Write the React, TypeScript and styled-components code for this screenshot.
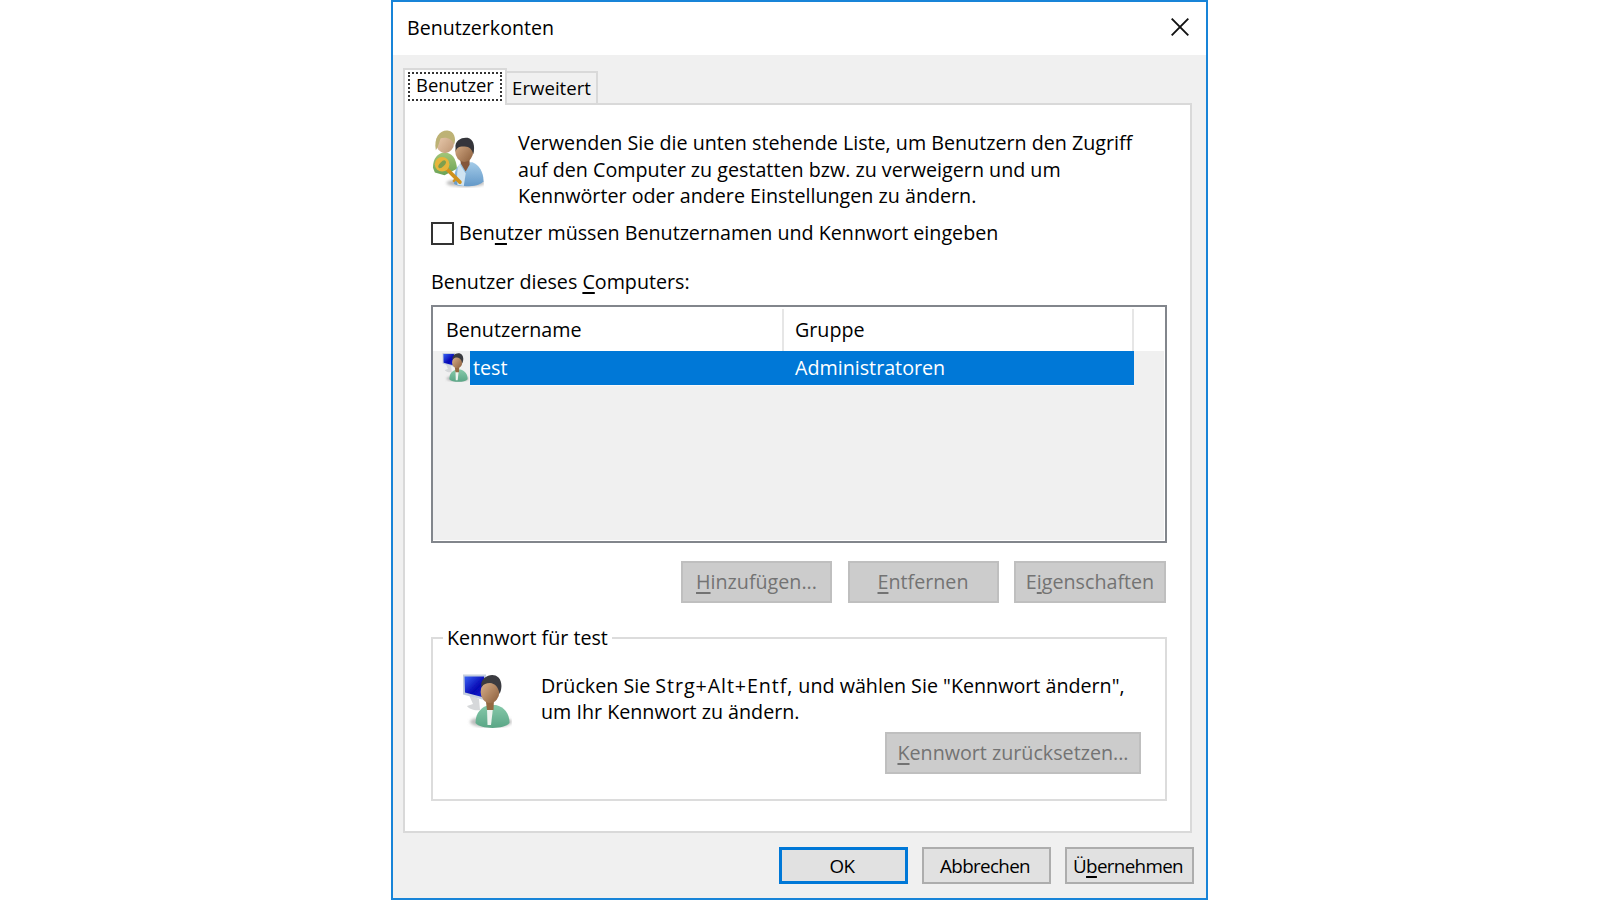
import React from "react";
import styled, { createGlobalStyle } from "styled-components";

const Global = createGlobalStyle`
  html, body { margin: 0; padding: 0; background: #ffffff; }
  body { font-family: "Open Sans", "Liberation Sans", sans-serif; font-size: 19.7px; color: #000; }
  * { box-sizing: border-box; }
`;

const Page = styled.div`
  width: 1600px;
  height: 900px;
  padding-left: 391px;
  overflow: hidden;
`;
const Win = styled.div`
  width: 817px;
  height: 900px;
  border: 2px solid #1884d8;
  background: #f0f0f0;
  display: flex;
  flex-direction: column;
`;
const TitleBar = styled.div`
  height: 53px;
  background: #fff;
  display: flex;
  align-items: center;
  justify-content: space-between;
  padding: 0 17px 3px 14px;
  flex: none;
`;
const Title = styled.div`
  font-size: 19.6px;
  margin-top: 1px;
`;
const Body = styled.div`
  padding: 13px 14px 0 10px;
  flex: none;
`;
const Tabs = styled.div`
  display: flex;
  align-items: flex-end;
  height: 35px;
  position: relative;
  z-index: 1;
`;
const ActiveTab = styled.div`
  width: 104px;
  height: 37px;
  margin-bottom: -2px;
  background: #fff;
  border: 2px solid #d9d9d9;
  border-bottom: none;
  padding: 2px 2px 3px 3px;
`;
const Focus = styled.div`
  height: 29px;
  margin-right: 1px;
  border: 2px dotted #333;
  display: flex;
  align-items: center;
  justify-content: center;
  font-size: 18.4px;
  line-height: 24px;
  padding-bottom: 4px;
`;
const PlainTab = styled.div`
  width: 91px;
  height: 32px;
  background: #f0f0f0;
  border: 2px solid #d9d9d9;
  border-left: none;
  border-bottom: none;
  display: flex;
  align-items: center;
  justify-content: center;
  padding-bottom: 2px;
  font-size: 18.6px;
`;
const Panel = styled.div`
  height: 730px;
  background: #fff;
  border: 2px solid #d9d9d9;
  padding: 25px 23px 0 26px;
`;
const Intro = styled.div`
  display: flex;
  height: 79.5px;
`;
const IntroIconCell = styled.div`
  width: 87px;
  flex: none;
`;
const IntroIcon = styled.svg`
  display: block;
  margin: 0 0 0 1px;
`;
const Para = styled.p`
  margin: 0;
  line-height: 26.5px;
  white-space: nowrap;
`;
const CheckRow = styled.div`
  margin-top: 12px;
  height: 23px;
  display: flex;
  align-items: center;
  gap: 5px;
  white-space: nowrap;
`;
const Box = styled.span`
  width: 23px;
  height: 23px;
  flex: none;
  background: #fff;
  border: 2px solid #333;
`;
const CheckText = styled.span`
  padding-bottom: 2px;
`;
const Key = styled.span`
  text-decoration: underline;
  text-decoration-thickness: 1.5px;
  text-underline-offset: 3px;
`;
const FieldLabel = styled.div`
  margin-top: 24px;
  line-height: 26.5px;
`;
const List = styled.div`
  margin-top: 9.5px;
  height: 238px;
  border: 2px solid #82868c;
  background: #f0f0f0;
  display: flex;
  flex-direction: column;
  box-shadow: inset -1px -1px 0 #fff;
`;
const ListHead = styled.div`
  height: 44px;
  background: #fff;
  flex: none;
  display: flex;
`;
const HeadCell = styled.div<{ $w: number; $pad: number }>`
  width: ${(p) => p.$w}px;
  flex: none;
  padding-left: ${(p) => p.$pad}px;
  margin-top: 2px;
  border-right: 2px solid #e6e6e6;
  display: flex;
  align-items: center;
`;
const ListRow = styled.div`
  height: 34px;
  display: flex;
  flex: none;
`;
const RowIconCell = styled.div`
  width: 37px;
  flex: none;
  padding: 1px 0 0 9px;
`;
const SmallIcon = styled.svg`
  display: block;
`;
const Selected = styled.div`
  width: 664px;
  flex: none;
  background: #0078d7;
  color: #fff;
  display: flex;
  align-items: center;
  box-shadow: 0 1px 0 #f9f9f9;
`;
const SelCell = styled.div<{ $w: number }>`
  width: ${(p) => p.$w}px;
  flex: none;
  padding-left: ${(p) => (p.$w > 320 ? 12 : 3)}px;
`;
const ButtonRow = styled.div`
  margin-top: 18px;
  display: flex;
  justify-content: flex-end;
  gap: 15.5px;
  padding-right: 1px;
`;
const DisabledButton = styled.div<{ $w: number }>`
  width: ${(p) => p.$w}px;
  height: 42px;
  background: #cccccc;
  border: 2px solid #bfbfbf;
  color: #737373;
  display: flex;
  align-items: center;
  justify-content: center;
  white-space: nowrap;
`;
const Group = styled.fieldset`
  margin: 22px 0 0 0;
  padding: 0 24px 0 0;
  height: 176px;
  border: 2px solid #dcdcdc;
  min-width: 0;
`;
const Legend = styled.legend`
  margin-left: 10px;
  padding: 0 4px;
  line-height: 26px;
`;
const GroupBody = styled.div`
  display: flex;
  padding-top: 22px;
  height: 75px;
`;
const GroupIconCell = styled.div`
  width: 108px;
  flex: none;
  padding-left: 29px;
`;
const GroupIcon = styled.svg`
  display: block;
`;
const Combo = styled.span`
  letter-spacing: 0.9px;
`;
const GroupAction = styled.div`
  display: flex;
  justify-content: flex-end;
  margin-top: 6px;
`;
const Footer = styled.div`
  display: flex;
  justify-content: flex-end;
  gap: 14px;
  padding-top: 14px;
  margin-right: -2px;
`;
const FootButton = styled.div<{ $primary?: boolean }>`
  width: 129px;
  height: 37px;
  background: #e1e1e1;
  border: ${(p) => (p.$primary ? "3px solid #0078d7" : "2px solid #adadad")};
  display: flex;
  align-items: center;
  justify-content: center;
  white-space: nowrap;
  font-size: 18.8px;
  letter-spacing: -0.65px;
  padding-right: 3px;
`;

const CloseIcon = () => (
  <svg width="18" height="18" viewBox="0 0 18 18" aria-hidden>
    <path d="M0.7 0.7 L17.3 17.3 M17.3 0.7 L0.7 17.3" stroke="#111" strokeWidth="1.9" fill="none" />
  </svg>
);

const IconDefs = () => (
  <defs>
    <filter id="soft" x="-10%" y="-10%" width="120%" height="120%">
      <feGaussianBlur stdDeviation="0.6" />
    </filter>
    <filter id="softer" x="-30%" y="-50%" width="160%" height="200%">
      <feGaussianBlur stdDeviation="1.8" />
    </filter>
    <linearGradient id="skin" x1="0" y1="0" x2="1" y2="1">
      <stop offset="0" stopColor="#dcb48e" />
      <stop offset="1" stopColor="#8a5c3a" />
    </linearGradient>
    <linearGradient id="skinLight" x1="0" y1="0" x2="1" y2="1">
      <stop offset="0" stopColor="#efd2b6" />
      <stop offset="1" stopColor="#bd9573" />
    </linearGradient>
    <linearGradient id="screen" x1="0" y1="0" x2="1" y2="1">
      <stop offset="0" stopColor="#3a63f4" />
      <stop offset="0.55" stopColor="#0608b4" />
      <stop offset="1" stopColor="#0a2ad8" />
    </linearGradient>
    <linearGradient id="green" x1="0" y1="0" x2="0" y2="1">
      <stop offset="0" stopColor="#86c9aa" />
      <stop offset="1" stopColor="#5aa686" />
    </linearGradient>
    <linearGradient id="blue" x1="0" y1="0" x2="0" y2="1">
      <stop offset="0" stopColor="#a4cbe8" />
      <stop offset="1" stopColor="#6298c8" />
    </linearGradient>
    <linearGradient id="leaf" x1="0" y1="0" x2="0" y2="1">
      <stop offset="0" stopColor="#a3c678" />
      <stop offset="1" stopColor="#6aa356" />
    </linearGradient>
  </defs>
);

const PersonShapes = () => (
  <g filter="url(#soft)">
    <ellipse cx="42" cy="59" rx="21" ry="5.5" fill="#bdbdbd" filter="url(#softer)" />
    <path d="M20 32 L30 36 L31 47 C26 48 20 46 18 43 L24 41 Z" fill="#d6d8da" />
    <path d="M14 11.5 L37 11.5 L39 38 L14 31.5 Z" fill="#c4cede" />
    <path d="M15.5 13.5 L35 13.5 L37 35 L16 29.5 Z" fill="url(#screen)" />
    <path d="M26.5 60 C26.5 49 33 44 39.5 42 L47 42 C55 44 60.5 50 60.5 60 C55 66.5 32 66.5 26.5 60 Z" fill="url(#green)" />
    <path d="M38 45 L44 45 L42 62 L38.5 62 Z" fill="#eef3ef" />
    <path d="M36.5 35 L45 35 L44.5 47 L38 47 Z" fill="#94673f" />
    <ellipse cx="41" cy="29" rx="9.4" ry="11" fill="url(#skin)" />
    <path d="M32.5 24 C30 15 43 8 49.5 14.5 C53.5 19 53 26 50.5 31 C49.5 24 46 20.5 41 20 C37 20 35 21 32.5 24 Z" fill="#3a3b40" />
  </g>
);

const PersonIcon = ({ w, h, as: Comp }: { w: number; h: number; as: typeof SmallIcon }) => (
  <Comp width={w} height={h} viewBox="13 10 50 55" aria-hidden>
    <IconDefs />
    <PersonShapes />
  </Comp>
);

const UsersIcon = () => (
  <IntroIcon width="52" height="58" viewBox="9 4 54 60" aria-hidden>
    <IconDefs />
    <g filter="url(#soft)">
      <ellipse cx="44" cy="59" rx="20" ry="4" fill="#bcbcbc" filter="url(#softer)" />
      <path d="M10 43 C10 33 15 28 22 27 C30 28 34 33 35 44 L22 51 L12 48 Z" fill="url(#leaf)" />
      <ellipse cx="22.5" cy="17" rx="9.4" ry="11" fill="url(#skinLight)" />
      <path d="M13 25 C10.5 11 18 4 25 4.5 C32 5 34.5 13 32 19 C30 13 24 10.5 18 12.5 C16.5 16 16 21 13 25 Z" fill="#bdb274" />
      <path d="M32 60 C31 47 35 40 42 37.5 L51 37.5 C58 40 62.5 48 62.5 57 C58 63.5 38 63.5 32 60 Z" fill="url(#blue)" />
      <path d="M37.5 39 L44 49 L42 62 L35.5 61 C34.5 52 35 44 37.5 39 Z" fill="#cfe3f1" />
      <path d="M38 33 L48 33 L48 40 L44 47 L39 39 Z" fill="#84573a" />
      <ellipse cx="42.5" cy="26" rx="9.4" ry="11.2" fill="url(#skin)" />
      <path d="M33.5 23 C32 14 41 11 46 12 C52 13.5 54 20 52 29 C50.5 24 48 21 43 21 C38 21 35.5 21 33.5 26 Z" fill="#34363a" />
      <path d="M24 44 L38 58" stroke="#cf921f" strokeWidth="3.8" strokeLinecap="round" />
      <path d="M34 54 L31 57.5" stroke="#cf921f" strokeWidth="2.4" />
      <circle cx="19.5" cy="39.5" r="7.6" fill="#e7b53b" />
      <ellipse cx="19.5" cy="39.5" rx="5" ry="2.4" transform="rotate(-45 19.5 39.5)" fill="#7e9f4e" />
    </g>
  </IntroIcon>
);

export default function App() {
  return (
    <>
      <Global />
      <Page>
        <Win>
          <TitleBar>
            <Title>Benutzerkonten</Title>
            <CloseIcon />
          </TitleBar>
          <Body>
            <Tabs>
              <ActiveTab>
                <Focus>Benutzer</Focus>
              </ActiveTab>
              <PlainTab>Erweitert</PlainTab>
            </Tabs>
            <Panel>
              <Intro>
                <IntroIconCell>
                  <UsersIcon />
                </IntroIconCell>
                <Para>
                  Verwenden Sie die unten stehende Liste, um Benutzern den Zugriff
                  <br />
                  auf den Computer zu gestatten bzw. zu verweigern und um
                  <br />
                  Kennwörter oder andere Einstellungen zu ändern.
                </Para>
              </Intro>
              <CheckRow>
                <Box />
                <CheckText>
                  Ben<Key>u</Key>tzer müssen Benutzernamen und Kennwort eingeben
                </CheckText>
              </CheckRow>
              <FieldLabel>
                Benutzer dieses <Key>C</Key>omputers:
              </FieldLabel>
              <List>
                <ListHead>
                  <HeadCell $w={351} $pad={13}>Benutzername</HeadCell>
                  <HeadCell $w={350} $pad={11}>Gruppe</HeadCell>
                </ListHead>
                <ListRow>
                  <RowIconCell>
                    <PersonIcon w={27} h={30} as={SmallIcon} />
                  </RowIconCell>
                  <Selected>
                    <SelCell $w={313}>test</SelCell>
                    <SelCell $w={351}>Administratoren</SelCell>
                  </Selected>
                </ListRow>
              </List>
              <ButtonRow>
                <DisabledButton $w={151}>
                  <span>
                    <Key>H</Key>inzufügen...
                  </span>
                </DisabledButton>
                <DisabledButton $w={151}>
                  <span>
                    <Key>E</Key>ntfernen
                  </span>
                </DisabledButton>
                <DisabledButton $w={152}>
                  <span>
                    E<Key>i</Key>genschaften
                  </span>
                </DisabledButton>
              </ButtonRow>
              <Group>
                <Legend>Kennwort für test</Legend>
                <GroupBody>
                  <GroupIconCell>
                    <PersonIcon w={50} h={55} as={GroupIcon} />
                  </GroupIconCell>
                  <Para>
                    Drücken Sie <Combo>Strg+Alt+Entf,</Combo> und wählen Sie "Kennwort ändern",
                    <br />
                    um Ihr Kennwort zu ändern.
                  </Para>
                </GroupBody>
                <GroupAction>
                  <DisabledButton $w={256}>
                    <span>
                      <Key>K</Key>ennwort zurücksetzen...
                    </span>
                  </DisabledButton>
                </GroupAction>
              </Group>
            </Panel>
            <Footer>
              <FootButton $primary>OK</FootButton>
              <FootButton>Abbrechen</FootButton>
              <FootButton>
                <span>
                  Ü<Key>b</Key>ernehmen
                </span>
              </FootButton>
            </Footer>
          </Body>
        </Win>
      </Page>
    </>
  );
}
